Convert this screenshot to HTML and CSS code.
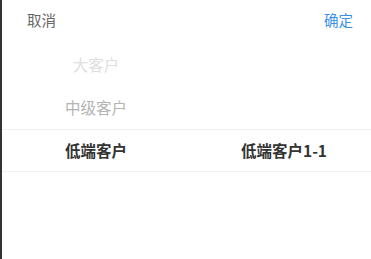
FILE: index.html
```html
<!DOCTYPE html>
<html lang="zh-CN">
<head>
<meta charset="utf-8">
<title>picker</title>
<link rel="stylesheet" href="styles.css">
</head>
<body>
<div class="frame">
  <div class="edge"></div>
  <div class="picker">
    <div class="toolbar">
      <span class="btn cancel">取消</span>
      <span class="btn confirm">确定</span>
    </div>
    <div class="columns">
      <div class="column">
        <div class="item far">大客户</div>
        <div class="item near">中级客户</div>
        <div class="item selected">低端客户</div>
        <div class="item"></div>
        <div class="item"></div>
      </div>
      <div class="column">
        <div class="item"></div>
        <div class="item"></div>
        <div class="item selected">低端客户1-1</div>
        <div class="item"></div>
        <div class="item"></div>
      </div>
      <div class="frame-line"></div>
    </div>
  </div>
</div>
</body>
</html>
```
FILE: styles.css
```css
html, body {
  margin: 0;
  padding: 0;
  background: #ffffff;
  overflow: hidden;
}
body {
  font-family: "Noto Sans CJK SC", "Noto Sans", sans-serif;
  width: 371px;
  height: 259px;
}
.frame {
  display: flex;
  height: 259px;
  width: 380px;
}
.edge {
  width: 2px;
  flex: none;
  background: #333333;
}
.picker {
  flex: none;
  width: 376px;
  background: #ffffff;
}
.toolbar {
  height: 43px;
  display: flex;
  justify-content: space-between;
  align-items: center;
  padding: 0 25px;
  box-sizing: border-box;
}
.btn {
  font-size: 14.5px;
  line-height: 20px;
  margin-top: -4px;
}
.cancel { color: #666666; }
.confirm { color: #3990ea; }
.columns {
  position: relative;
  display: grid;
  grid-template-columns: 1fr 1fr;
}
.column {
  display: flex;
  flex-direction: column;
}
.item {
  height: 43px;
  display: flex;
  align-items: center;
  justify-content: center;
  font-size: 15.5px;
  color: #333333;
  padding-bottom: 2px;
  box-sizing: border-box;
}
.item.far { color: #dedede; }
.item.near { color: #b4b4b4; }
.item.selected { color: #333333; font-weight: 600; }
.frame-line {
  position: absolute;
  left: 0;
  right: 0;
  top: 86px;
  height: 43px;
  border-top: 1px solid #f0f0f0;
  border-bottom: 1px solid #f0f0f0;
  box-sizing: border-box;
  pointer-events: none;
}
```
